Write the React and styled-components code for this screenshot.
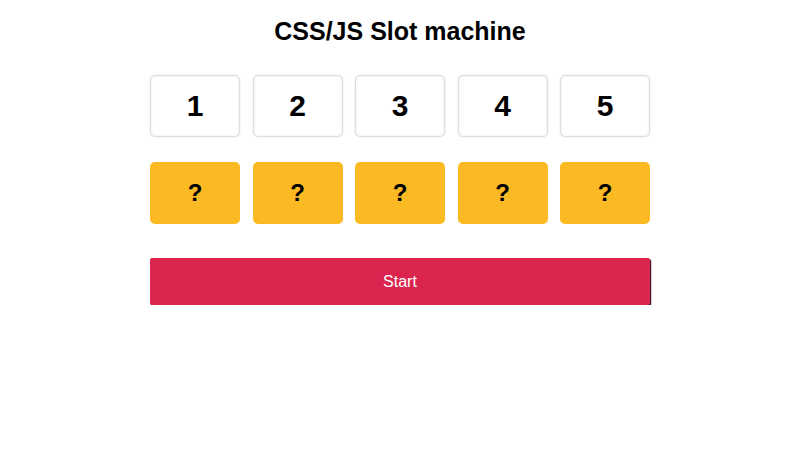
import React from "react";
import styled, { createGlobalStyle } from "styled-components";

const GlobalStyle = createGlobalStyle`
  body {
    margin: 0;
    background: #fff;
    font-family: "Liberation Sans", Arial, sans-serif;
    color: #000;
  }
`;

const Page = styled.div`
  width: 500px;
  margin: 0 auto;
  padding-top: 15px;
  display: flex;
  flex-direction: column;
`;

const Title = styled.h1`
  margin: 0 0 28px;
  text-align: center;
  font-size: 25px;
  line-height: 32px;
  font-weight: bold;
`;

const Row = styled.div`
  display: grid;
  grid-template-columns: repeat(5, 1fr);
  gap: 12.5px;
  margin-bottom: ${(p) => p.$gapBelow}px;
`;

const Cell = styled.div`
  height: 62px;
  box-sizing: border-box;
  border-radius: 5px;
  display: flex;
  align-items: center;
  justify-content: center;
  font-weight: bold;
  background: ${(p) => (p.$reel ? "#fbb923" : "#fff")};
  border: ${(p) => (p.$reel ? "none" : "1px solid #dedede")};
  box-shadow: ${(p) =>
    p.$reel ? "none" : "0 0 2px rgba(0,0,0,0.12), inset 0 0 3px rgba(0,0,0,0.08)"};
  font-size: ${(p) => (p.$reel ? "24px" : "30px")};
`;

const StartButton = styled.button`
  height: 47px;
  width: 500px;
  margin-top: 1px;
  background: #da264e;
  color: #fff;
  font-family: "Liberation Sans", Arial, sans-serif;
  font-size: 16px;
  border: none;
  border-radius: 2px;
  box-shadow: 1px 1px 0 #4a1a2a, 2px 2px 1px rgba(0, 0, 0, 0.2);
  cursor: pointer;
`;

const numbers = [1, 2, 3, 4, 5];

export default function App() {
  return (
    <>
      <GlobalStyle />
      <Page>
        <Title>CSS/JS Slot machine</Title>
        <Row $gapBelow={25}>
          {numbers.map((n) => (
            <Cell key={n}>{n}</Cell>
          ))}
        </Row>
        <Row $gapBelow={33}>
          {numbers.map((n) => (
            <Cell key={n} $reel>
              ?
            </Cell>
          ))}
        </Row>
        <StartButton>Start</StartButton>
      </Page>
    </>
  );
}
